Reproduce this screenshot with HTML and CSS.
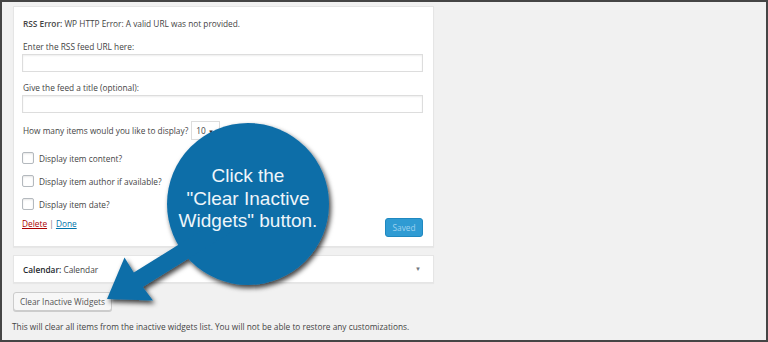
FILE: index.html
```html
<!DOCTYPE html>
<html lang="en">
<head>
  <meta charset="UTF-8" />
  <title>Widgets - Clear Inactive Widgets</title>
  <link rel="stylesheet" href="styles.css">
</head>
<body>
  <div class="frame">
    <div class="widget">
      <p class="error"><strong>RSS Error:</strong> WP HTTP Error: A valid URL was not provided.</p>
      <label class="field-label">Enter the RSS feed URL here:</label>
      <div class="text-input"></div>
      <label class="field-label">Give the feed a title (optional):</label>
      <div class="text-input"></div>
      <div class="items-row">
        <span>How many items would you like to display?</span>
        <span class="select">10 <span class="caret">&#9660;</span></span>
      </div>
      <div class="check-row"><span class="checkbox"></span>Display item content?</div>
      <div class="check-row"><span class="checkbox"></span>Display item author if available?</div>
      <div class="check-row"><span class="checkbox"></span>Display item date?</div>
      <div class="controls">
        <span class="links"><a class="delete">Delete</a> | <a class="done">Done</a></span>
        <span class="saved">Saved</span>
      </div>
    </div>

    <div class="calendar">
      <span><strong>Calendar:</strong> Calendar</span>
      <span class="toggle">&#9660;</span>
    </div>

    <div class="clear-btn">Clear Inactive Widgets</div>
    <p class="note">This will clear all items from the inactive widgets list. You will not be able to restore any customizations.</p>
  </div>

  <!-- callout bubble -->
  <svg class="callout" width="768" height="342" viewBox="0 0 768 342">
    <defs>
      <filter id="shade" x="-20%" y="-20%" width="140%" height="140%">
        <feDropShadow dx="2" dy="3" stdDeviation="2.5" flood-color="#000" flood-opacity="0.75" />
      </filter>
    </defs>
    <g filter="url(#shade)" fill="#106ea8">
      <circle cx="248" cy="204" r="81" />
      <polygon points="107,299 124.5,257.5 133.8,272.6 231,212 240,226.5 142.8,287.1 153,300.5" />
    </g>
  </svg>
  <div class="callout-text">Click the<br>"Clear Inactive<br>Widgets" button.</div>
</body>
</html>
```

FILE: styles.css
```css
body {
  margin: 0;
  position: relative;
  width: 768px;
  height: 342px;
  font-family: 'Open Sans', 'Noto Sans', sans-serif;
  font-size: 8.3px;
  color: #444;
}
.frame {
  box-sizing: border-box;
  width: 768px;
  height: 342px;
  border: 2px solid #454545;
  background: #f1f1f1;
  padding: 4px 0 0 11px;
}
.widget {
  box-sizing: border-box;
  width: 421px;
  background: #fff;
  border: 1px solid #e5e5e5;
  box-shadow: 0 1px 1px rgba(0,0,0,0.04);
  padding: 10px 10px 9px 9px;
}
.error {
  margin: 0;
  line-height: 14px;
}
.error strong {
  font-weight: 600;
}
.field-label {
  display: block;
  margin-top: 9px;
  line-height: 14px;
}
.text-input {
  box-sizing: border-box;
  height: 18px;
  border: 1px solid #ddd;
  box-shadow: inset 0 1px 2px rgba(0,0,0,0.07);
  margin-left: -1px;
}
.items-row {
  display: flex;
  align-items: center;
  margin-top: 8px;
  height: 19px;
}
.select {
  box-sizing: border-box;
  height: 19px;
  width: 29px;
  margin-left: 3px;
  border: 1px solid #ddd;
  padding-left: 4px;
  line-height: 17px;
}
.caret {
  font-size: 6px;
  color: #333;
}
.check-row {
  display: flex;
  align-items: center;
  height: 12px;
  margin-top: 11px;
}
.items-row + .check-row {
  margin-top: 12px;
}
.checkbox {
  box-sizing: border-box;
  width: 12px;
  height: 12px;
  border: 1px solid #b4b9be;
  border-radius: 2px;
  box-shadow: inset 0 1px 2px rgba(0,0,0,0.1);
  margin: 0 5px 0 -1px;
}
.controls {
  display: flex;
  justify-content: space-between;
  align-items: flex-start;
  margin-top: 8px;
  height: 19px;
}
.links {
  line-height: 14px;
  margin-top: -1px;
  margin-left: -1px;
  color: #777;
}
.delete {
  color: #a00;
  text-decoration: underline;
}
.done {
  color: #0073aa;
  text-decoration: underline;
}
.saved {
  box-sizing: border-box;
  width: 38px;
  height: 19px;
  line-height: 17px;
  text-align: center;
  background: #2f9bd3;
  border: 1px solid #1f88c0;
  border-radius: 3px;
  color: #9fd2ef;
}
.calendar {
  box-sizing: border-box;
  display: flex;
  justify-content: space-between;
  align-items: center;
  width: 421px;
  height: 28px;
  margin-top: 8px;
  padding: 0 12px 0 9px;
  background: #fff;
  border: 1px solid #e5e5e5;
  box-shadow: 0 1px 1px rgba(0,0,0,0.04);
}
.calendar strong {
  font-weight: 600;
  color: #23282d;
}
.toggle {
  font-size: 6px;
  color: #72777c;
}
.clear-btn {
  box-sizing: border-box;
  display: inline-block;
  margin-top: 9px;
  width: 99px;
  height: 19px;
  line-height: 17px;
  text-align: center;
  background: #f7f7f7;
  border: 1px solid #ccc;
  border-radius: 3px;
  box-shadow: 0 1px 0 #ccc;
  color: #555;
}
.note {
  margin: 9px 0 0 -1px;
  line-height: 14px;
}
.callout {
  position: absolute;
  left: 0;
  top: 0;
}
.callout-text {
  position: absolute;
  left: 157px;
  top: 165px;
  width: 182px;
  text-align: center;
  font-family: 'Liberation Sans', Arial, sans-serif;
  font-size: 19px;
  line-height: 22.5px;
  color: #eef5fa;
}
```
